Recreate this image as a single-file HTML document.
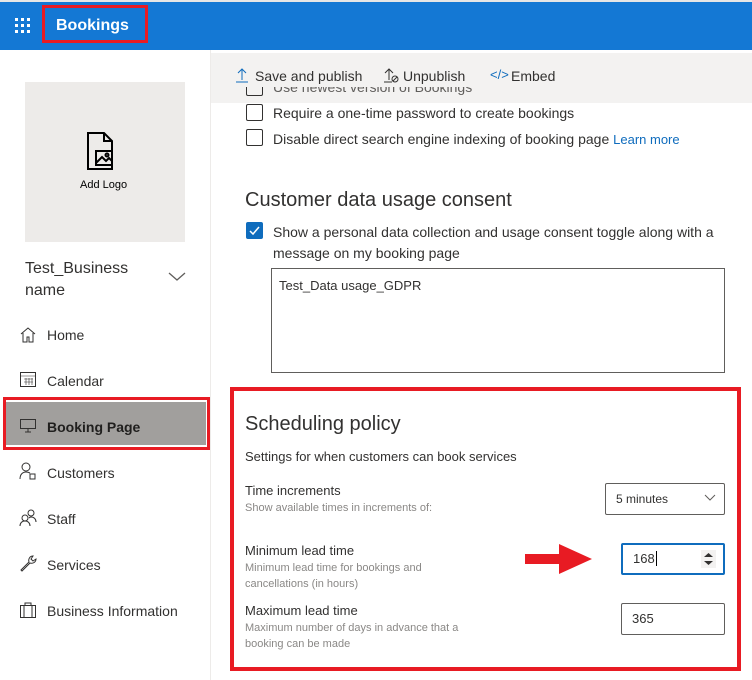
<!DOCTYPE html>
<html><head><style>
body{margin:0;width:752px;height:680px;position:relative;overflow:hidden;font-family:"Liberation Sans",sans-serif;background:#fff;color:#323130}
.a{position:absolute}
.cb{position:absolute;width:17px;height:17px;border:1px solid #323130;border-radius:2px;box-sizing:border-box}
.t{font-size:14px;white-space:nowrap}
.nav{position:absolute;left:47px;font-size:14px}
.small{font-size:11px;color:#8a8886;line-height:16px}
.inp{position:absolute;border:1px solid #605e5c;border-radius:2px;box-sizing:border-box;font-size:13px;padding-left:10px}
</style></head><body>
<div class="a" style="left:0;top:0;width:752px;height:2px;background:#e6e6e6"></div>
<div class="a" style="left:0;top:2px;width:752px;height:48px;background:#1478d4"></div>
<svg class="a" style="left:15px;top:18px" width="16" height="16"><g fill="#fff"><rect x="0" y="0" width="3" height="3"/><rect x="6" y="0" width="3" height="3"/><rect x="12" y="0" width="3" height="3"/><rect x="0" y="6" width="3" height="3"/><rect x="6" y="6" width="3" height="3"/><rect x="12" y="6" width="3" height="3"/><rect x="0" y="12" width="3" height="3"/><rect x="6" y="12" width="3" height="3"/><rect x="12" y="12" width="3" height="3"/></g></svg>
<div class="a" style="left:42px;top:5px;width:106px;height:38px;border:3px solid #e81b23;box-sizing:border-box"></div>
<div class="a" style="left:56px;top:17px;color:#fff;font-weight:bold;font-size:16px">Bookings</div>
<!-- sidebar -->
<div class="a" style="left:210px;top:50px;width:1px;height:630px;background:#edebe9"></div>
<div class="a" style="left:25px;top:82px;width:160px;height:160px;background:#edebe9"></div>
<svg class="a" style="left:86px;top:131px" width="40" height="42" fill="none" stroke="#000" stroke-width="2"><path d="M2 2h16l8 8v28H2z M18 2v8h8"/><rect x="10" y="20" width="16" height="14" fill="#edebe9"/><path d="M10 32l6-6 4 4 3-3 3 3"/><circle cx="21" cy="24" r="1.5"/></svg>
<div class="a" style="left:80px;top:179px;font-size:11px;color:#000">Add Logo</div>
<div class="a" style="left:25px;top:258px;font-size:16px;line-height:22px">Test_Business<br>name</div>
<svg class="a" style="left:168px;top:272px" width="18" height="10"><path d="M1 1l8 7 8-7" fill="none" stroke="#605e5c" stroke-width="1.3"/></svg>
<svg class="a" style="left:19px;top:326px" width="18" height="18" fill="none" stroke="#323130"><path d="M2 8l7-6 7 6M4 7v9h4v-5h2v5h4V7"/></svg>
<div class="nav" style="top:327px">Home</div>
<svg class="a" style="left:19px;top:370px" width="18" height="18" fill="none" stroke="#323130"><rect x="1.5" y="2.5" width="15" height="14"/><path d="M1.5 6h15M5 9h9M5 12h9M7 8v7M10 8v7M13 8v7" stroke-width=".6"/></svg>
<div class="nav" style="top:373px">Calendar</div>
<div class="a" style="left:5px;top:402px;width:201px;height:43px;background:#a19f9d"></div>
<div class="a" style="left:3px;top:397px;width:207px;height:53px;border:3px solid #e81b23;box-sizing:border-box"></div>
<svg class="a" style="left:19px;top:418px" width="18" height="16" fill="none" stroke="#323130"><rect x="1.5" y="1.5" width="15" height="9"/><path d="M9 11v3M6 14h6"/></svg>
<div class="nav" style="top:419px;font-weight:bold;color:#201f1e">Booking Page</div>
<svg class="a" style="left:19px;top:462px" width="18" height="18" fill="none" stroke="#323130"><circle cx="7" cy="5" r="4"/><path d="M1 17c0-5 3-7 6-7 2 0 3 .5 4 1"/><rect x="11" y="12" width="5" height="5"/></svg>
<div class="nav" style="top:465px">Customers</div>
<svg class="a" style="left:19px;top:509px" width="18" height="18" fill="none" stroke="#323130"><circle cx="12" cy="4" r="3"/><circle cx="6" cy="9" r="3"/><path d="M1 17c0-3 2-5 5-5s5 2 5 5M10 9c1-1 1.5-1 2-1 3 0 5 2 5 5"/></svg>
<div class="nav" style="top:511px">Staff</div>
<svg class="a" style="left:19px;top:555px" width="18" height="18" fill="none" stroke="#323130"><path d="M2 15l8-8c-1-3 1-6 4-6l-2 3 2 2 3-2c0 3-3 5-6 4l-8 8z"/></svg>
<div class="nav" style="top:557px">Services</div>
<svg class="a" style="left:19px;top:601px" width="18" height="18" fill="none" stroke="#323130"><rect x="1.5" y="4.5" width="15" height="12"/><path d="M6 4.5V2h6v2.5M5 4.5v12M13 4.5v12"/></svg>
<div class="nav" style="top:603px">Business Information</div>
<!-- content -->
<div class="a" style="left:211px;top:53px;width:541px;height:50px;background:#f3f2f1"></div>
<div class="a" style="left:240px;top:87px;width:300px;height:10px;overflow:hidden">
  <div class="cb" style="left:6px;top:-8px"></div>
  <div class="a t" style="left:33px;top:-8px;color:#605e5c">Use newest version of Bookings</div>
</div>
<svg class="a" style="left:235px;top:67px" width="14" height="16" fill="none" stroke="#0f6cbd"><path d="M7 13V2M3 6l4-4 4 4M1 15h12"/></svg>
<div class="a t" style="left:255px;top:68px">Save and publish</div>
<svg class="a" style="left:383px;top:67px" width="18" height="16" fill="none" stroke="#323130"><path d="M6 13V2M2 6l4-4 4 4M1 15h8"/><circle cx="12" cy="12" r="3"/><path d="M10 14l4-4"/></svg>
<div class="a t" style="left:403px;top:68px">Unpublish</div>
<div class="a t" style="left:490px;top:67px;color:#0f6cbd;font-size:13px">&lt;/&gt;</div>
<div class="a t" style="left:511px;top:68px">Embed</div>
<div class="cb" style="left:246px;top:104px"></div>
<div class="a t" style="left:273px;top:105px">Require a one-time password to create bookings</div>
<div class="cb" style="left:246px;top:129px"></div>
<div class="a t" style="left:273px;top:131px">Disable direct search engine indexing of booking page <span style="color:#0f6cbd;font-size:13px">Learn more</span></div>
<div class="a" style="left:245px;top:189px;font-size:20px">Customer data usage consent</div>
<div class="cb" style="left:246px;top:222px;background:#0f6cbd;border-color:#0f6cbd"></div>
<svg class="a" style="left:248px;top:224px" width="13" height="13"><path d="M2 7l3 3 6-7" fill="none" stroke="#fff" stroke-width="1.5"/></svg>
<div class="a" style="left:273px;top:222px;font-size:14px;line-height:21px;width:460px">Show a personal data collection and usage consent toggle along with a message on my booking page</div>
<div class="a" style="left:271px;top:268px;width:454px;height:105px;border:1px solid #605e5c;box-sizing:border-box"></div>
<div class="a" style="left:279px;top:278px;font-size:13px">Test_Data usage_GDPR</div>
<div class="a" style="left:230px;top:387px;width:511px;height:284px;border:4px solid #e81b23;box-sizing:border-box"></div>
<div class="a" style="left:245px;top:413px;font-size:20px">Scheduling policy</div>
<div class="a" style="left:245px;top:449px;font-size:13px">Settings for when customers can book services</div>
<div class="a" style="left:245px;top:483px;font-size:13px">Time increments</div>
<div class="a small" style="left:245px;top:500px">Show available times in increments of:</div>
<div class="inp" style="left:605px;top:483px;width:120px;height:32px;line-height:30px;font-size:12px">5 minutes</div>
<svg class="a" style="left:704px;top:494px" width="12" height="8"><path d="M1 1l5 5 5-5" fill="none" stroke="#605e5c"/></svg>
<div class="a" style="left:245px;top:543px;font-size:13px">Minimum lead time</div>
<div class="a small" style="left:245px;top:560px;width:220px">Minimum lead time for bookings and cancellations (in hours)</div>
<svg class="a" style="left:525px;top:544px" width="68" height="30"><path d="M0 10h34V0l33 15-33 15V20H0z" fill="#e81b23"/></svg>
<div class="inp" style="left:621px;top:543px;width:104px;height:32px;line-height:28px;border:2px solid #0f6cbd">168<span style="border-left:1px solid #000;margin-left:1px"></span></div>
<div class="a" style="left:701px;top:550px;width:15px;height:18px;background:#f3f2f1"></div>
<svg class="a" style="left:704px;top:552px" width="9" height="14" fill="#323130"><path d="M0 5l4.5-4 4.5 4zM0 9l4.5 4 4.5-4z"/></svg>
<div class="a" style="left:245px;top:603px;font-size:13px">Maximum lead time</div>
<div class="a small" style="left:245px;top:620px;width:240px">Maximum number of days in advance that a booking can be made</div>
<div class="inp" style="left:621px;top:603px;width:104px;height:32px;line-height:30px">365</div>
</body></html>
